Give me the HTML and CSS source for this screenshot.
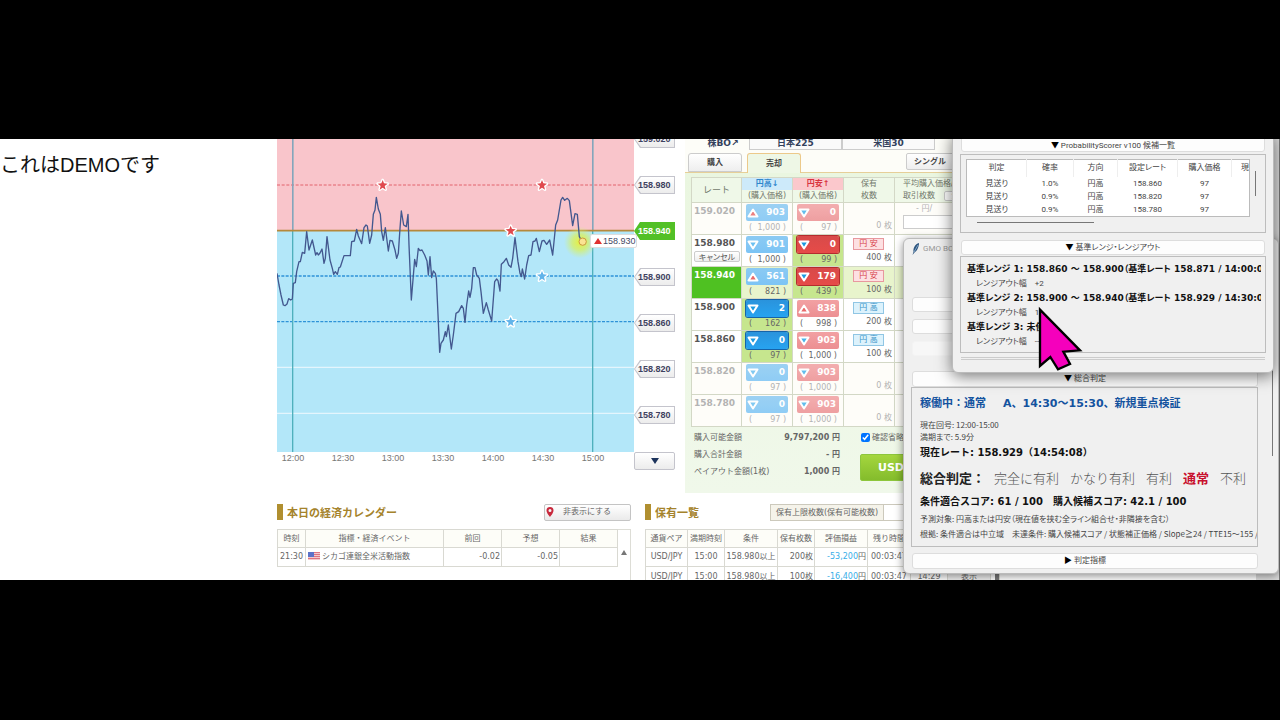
FILE: index.html
```html
<!DOCTYPE html>
<html lang="ja">
<head>
<meta charset="utf-8">
<title>DEMO</title>
<link rel="stylesheet" href="styles.css">
</head>
<body>
<svg class="defs" width="0" height="0" aria-hidden="true">
  <symbol id="star" viewBox="-20 -20 40 40"><path d="M0-15 4-5 15-4 6 3 9 14 0 8-9 14-6 3-15-4-4-5Z" stroke="#fff" stroke-width="8" stroke-linejoin="round" paint-order="stroke"/></symbol>
  <symbol id="down" viewBox="0 0 12 10"><path d="M1.5 1.5h9L6 8.5z" stroke="#fff" stroke-width="2" stroke-linejoin="round"/></symbol>
  <symbol id="up" viewBox="0 0 12 10"><path d="M1.5 8.500h9L6 1.500z" stroke="#fff" stroke-width="2" stroke-linejoin="round"/></symbol>
</svg>
<main class="scene">
  <p class="note">これはDEMOです</p>
  <div class="site">
    <div class="upper">
      <section class="chart">
        <svg class="plot" viewBox="21 12 1071 939">
          <defs><radialGradient id="glow"><stop offset="0" stop-color="#e8f03c"/><stop offset=".5" stop-color="#d8f060" stop-opacity=".75"/><stop offset="1" stop-color="#d0f080" stop-opacity="0"/></radialGradient></defs>
          <rect x="21" y="12" width="1071" height="276" fill="#f9c5cb"/>
          <rect x="21" y="288" width="1071" height="663" fill="#b3e7f9"/>
          <g stroke-width="3" fill="none">
            <path d="M21 697H1092M21 835H1092" stroke="#e4f5fd" stroke-width="4"/>
            <path d="M21 150H1092" stroke="#e2626c" stroke-dasharray="9 5"/>
            <path d="M21 423H1092M21 560H1092" stroke="#2f93d8" stroke-width="4" stroke-dasharray="9 4"/>
            <path d="M68 12V951M968 12V951" stroke="#4fb0bd" stroke-width="4"/>
            <path d="M68 12V285M968 12V285" stroke="#86a4bb" stroke-width="4"/>
            <path d="M21 287H1092" stroke="#b5893c" stroke-width="5"/>
          </g>
          <circle cx="930" cy="322" r="48" fill="url(#glow)"/>
          <polyline fill="none" stroke="#43588f" stroke-width="4" stroke-linejoin="round" points="21,415 27,450 33,480 40,510 45,512 51,507 56,491 62,495 67,492 70,445 76,443 80,410 87,380 91,380 97,352 104,355 110,290 117,345 127,315 137,360 141,353 145,360 150,354 156,342 162,385 166,370 171,305 180,375 187,400 191,418 196,410 202,418 207,398 211,396 222,362 241,362 245,320 253,318 260,283 265,303 275,326 282,278 288,270 292,273 299,325 305,300 310,238 315,225 319,187 325,222 331,238 335,290 340,316 346,278 355,348 360,316 367,318 375,345 380,370 385,355 390,280 394,228 401,270 409,275 414,238 417,330 424,495 434,373 439,395 445,340 450,347 456,345 464,360 471,378 475,420 480,365 485,428 490,408 496,415 499,430 505,560 509,652 513,625 520,615 526,590 529,605 535,570 544,642 550,600 558,535 566,530 575,512 580,520 585,562 590,510 596,468 600,487 605,460 610,398 615,398 620,420 628,430 633,470 640,535 649,503 655,525 665,558 671,480 674,440 680,432 684,437 690,468 694,388 702,380 709,370 716,390 723,397 728,370 735,308 744,380 750,415 754,425 757,402 764,432 770,390 776,362 783,360 789,320 795,318 799,310 808,350 816,318 822,316 830,328 839,315 848,360 857,270 863,255 873,195 878,187 884,196 892,190 898,197 908,272 915,236 922,238 928,305 935,318"/>
          <g fill="#e0494e"><use href="#star" x="318" y="130" width="40" height="40"/><use href="#star" x="796" y="130" width="40" height="40"/><use href="#star" x="702" y="267" width="40" height="40"/></g>
          <g fill="#62b4ea"><use href="#star" x="796" y="403" width="40" height="40"/><use href="#star" x="702" y="540" width="40" height="40"/></g>
          <circle cx="938" cy="320" r="11" fill="#fbe392" stroke="#c99a3c" stroke-width="3"/>
        </svg>
        <div class="current"><i></i>158.930</div>
        <div class="times"><span>12:00</span><span>12:30</span><span>13:00</span><span>13:30</span><span>14:00</span><span>14:30</span><span>15:00</span></div>
      </section>
      <div class="axis">
        <span class="tag"><b>159.020</b></span><span class="tag"><b>158.980</b></span><span class="tag on"><b>158.940</b></span><span class="tag"><b>158.900</b></span><span class="tag"><b>158.860</b></span><span class="tag"><b>158.820</b></span><span class="tag"><b>158.780</b></span>
        <button class="more" aria-label="下へ"><svg width="8" height="6" viewBox="0 0 8 6"><path d="M0 0h8L4 6z" fill="#1c335c"/></svg></button>
      </div>
      <section class="trade">
        <nav class="markets"><a class="stock" href="#">株BO↗</a><a href="#">日本225</a><a href="#">米国30</a></nav>
        <div class="tabs"><button>購入</button><button class="sel">売却</button><button class="single">シングル</button></div>
        <div class="board">
          <table class="rates">
            <colgroup><col class="c-rate"><col class="c-btn"><col class="c-btn"><col class="c-hold"><col></colgroup>
            <thead><tr><th class="rate-h">レート</th><th><em class="hi">円高↓</em>(購入価格)</th><th><em class="lo">円安↑</em>(購入価格)</th><th>保有<br>枚数</th><th class="avg">平均購入価格/<br>取引枚数 <button class="mini">全</button></th></tr></thead>
            <tbody>
              <tr class="dim"><td class="rate">159.020</td>
                <td><button class="bet blue"><svg fill="#e96a6a"><use href="#up"/></svg>903</button><span class="cost"><i>(</i>1,000 )</span></td>
                <td><button class="bet red"><svg fill="#49b4ea"><use href="#down"/></svg>0</button><span class="cost"><i>(</i>97 )</span></td>
                <td class="hold"><span>0 枚</span></td><td class="avg"><span class="yen">- 円/</span><input class="qty" aria-label="取引枚数"></td></tr>
              <tr><td class="rate">158.980<button class="cancel">キャンセル</button></td>
                <td><button class="bet blue"><svg fill="#6cc0f0"><use href="#down"/></svg>901</button><span class="cost"><i>(</i>1,000 )</span></td>
                <td class="held"><button class="bet red on"><svg fill="#1d9be0"><use href="#down"/></svg>0</button><span class="cost"><i>(</i>99 )</span></td>
                <td class="hold"><b class="low">円 安</b><span>400 枚</span></td><td></td></tr>
              <tr class="now"><td class="rate">158.940</td>
                <td><button class="bet blue"><svg fill="#e96a6a"><use href="#up"/></svg>561</button><span class="cost"><i>(</i>821 )</span></td>
                <td class="held"><button class="bet red on"><svg fill="#1d9be0"><use href="#down"/></svg>179</button><span class="cost"><i>(</i>439 )</span></td>
                <td class="hold"><b class="low">円 安</b><span>100 枚</span></td><td></td></tr>
              <tr><td class="rate">158.900</td>
                <td class="held"><button class="bet blue on"><svg fill="#1d9be0"><use href="#down"/></svg>2</button><span class="cost"><i>(</i>162 )</span></td>
                <td><button class="bet red"><svg fill="#e96a6a"><use href="#up"/></svg>838</button><span class="cost"><i>(</i>998 )</span></td>
                <td class="hold"><b class="high">円 高</b><span>200 枚</span></td><td></td></tr>
              <tr><td class="rate">158.860</td>
                <td class="held"><button class="bet blue on"><svg fill="#1d9be0"><use href="#down"/></svg>0</button><span class="cost"><i>(</i>97 )</span></td>
                <td><button class="bet red"><svg fill="#49b4ea"><use href="#down"/></svg>903</button><span class="cost"><i>(</i>1,000 )</span></td>
                <td class="hold"><b class="high">円 高</b><span>100 枚</span></td><td></td></tr>
              <tr class="dim"><td class="rate">158.820</td>
                <td><button class="bet blue"><svg fill="#6cc0f0"><use href="#down"/></svg>0</button><span class="cost"><i>(</i>97 )</span></td>
                <td><button class="bet red"><svg fill="#49b4ea"><use href="#down"/></svg>903</button><span class="cost"><i>(</i>1,000 )</span></td>
                <td class="hold"><span>0 枚</span></td><td></td></tr>
              <tr class="dim"><td class="rate">158.780</td>
                <td><button class="bet blue"><svg fill="#6cc0f0"><use href="#down"/></svg>0</button><span class="cost"><i>(</i>97 )</span></td>
                <td><button class="bet red"><svg fill="#49b4ea"><use href="#down"/></svg>903</button><span class="cost"><i>(</i>1,000 )</span></td>
                <td class="hold"><span>0 枚</span></td><td></td></tr>
            </tbody>
          </table>
          <div class="order">
            <dl class="sums"><dt>購入可能金額</dt><dd>9,797,200 円</dd><dt>購入合計金額</dt><dd>- 円</dd><dt>ペイアウト金額(1枚)</dt><dd>1,000 円</dd></dl>
            <div class="go"><label class="skip"><input type="checkbox" checked>確認省略</label><button class="usd">USD</button></div>
          </div>
        </div>
      </section>
    </div>
    <div class="lower">
      <section class="calendar">
        <header class="head"><h2>本日の経済カレンダー</h2><button class="hide"><svg width="8" height="10" viewBox="0 0 8 10"><path fill-rule="evenodd" d="M4 0a3.500 3.500 0 0 0-3.500 3.500C.5 6 4 10 4 10s3.500-4 3.500-6.500A3.500 3.500 0 0 0 4 0Zm0 2a1.500 1.500 0 1 1 0 3 1.500 1.500 0 0 1 0-3Z" fill="#c8283c"/></svg><span>非表示にする</span></button></header>
        <div class="calbody">
          <table class="grid cal">
            <colgroup><col class="w28"><col><col class="w58"><col class="w58"><col class="w58"></colgroup>
            <tr><th>時刻</th><th>指標・経済イベント</th><th>前回</th><th>予想</th><th>結果</th></tr>
            <tr><td>21:30</td><td class="event"><svg width="12" height="8" viewBox="0 0 12 8"><path fill="#f3c9cc" d="M0 0h12v8H0z"/><path d="M0 .5h12M0 2.500h12M0 4.500h12M0 6.500h12" stroke="#dd7480"/><path fill="#5b72c8" d="M0 0h6v5H0z"/></svg>シカゴ連銀全米活動指数</td><td class="num">-0.02</td><td class="num">-0.05</td><td></td></tr>
          </table>
          <div class="scroll"><svg width="6" height="5" viewBox="0 0 6 5"><path d="M3 0l3 5H0z" fill="#777"/></svg></div>
        </div>
      </section>
      <section class="holdings">
        <header class="head"><h2>保有一覧</h2><span class="limit">保有上限枚数(保有可能枚数)</span><span class="limit val"></span></header>
        <table class="grid pos">
          <colgroup><col class="w42"><col class="w37"><col class="w53"><col class="w37"><col class="w53"><col class="w43"><col class="w37"><col class="w43"><col></colgroup>
          <tr><th>通貨ペア</th><th>満期時刻</th><th>条件</th><th>保有枚数</th><th>評価損益</th><th>残り時間</th><th></th><th></th><th></th></tr>
          <tr><td>USD/JPY</td><td>15:00</td><td>158.980以上</td><td class="num">200枚</td><td class="num"><em>-53,200</em>円</td><td>00:03:47</td><td></td><td></td><td></td></tr>
          <tr><td>USD/JPY</td><td>15:00</td><td>158.980以上</td><td class="num">100枚</td><td class="num"><em>-16,400</em>円</td><td>00:03:47</td><td>14:29</td><td><button class="show">表示</button></td><td class="bar"><i></i></td></tr>
        </table>
      </section>
    </div>
  </div>

  <div class="edge"></div>
  <section class="win back">
    <header class="title"><svg width="8" height="12" viewBox="0 0 8 12"><path d="M7 0C3 1 1 5 1.500 9L.5 12l2-2.500C5 8 7 4 7 0Z" fill="#2d557f"/><path d="M6 2 2 9" stroke="#a8c8e4" stroke-width=".7"/></svg>GMO BO</header>
    <div class="slots"><input aria-label="入力1"><input aria-label="入力2"><input class="faint" aria-label="入力3"></div>
    <button class="fold"><i>▼</i> 総合判定</button>
    <div class="frame verdict">
      <p class="status"><span>稼働中：通常</span><span>A、14:30〜15:30、新規重点検証</span></p>
      <p class="small">現在回号: 12:00-15:00</p>
      <p class="small">満期まで: 5.9分</p>
      <p class="rate-now">現在レート: 158.929（14:54:08）</p>
      <p class="scale"><b>総合判定：</b><span>完全に有利</span><span>かなり有利</span><span>有利</span><b class="hit">通常</b><span>不利</span></p>
      <p class="score"><span>条件適合スコア: 61 / 100</span><span>購入候補スコア: 42.1 / 100</span></p>
      <p class="fine">予測対象: 円高または円安（現在値を挟む全ライン組合せ・非隣接を含む）</p>
      <p class="fine">根拠: 条件適合は中立域　未達条件: 購入候補スコア / 状態補正価格 / Slope≧24 / TTE15〜155 / I</p>
    </div>
    <button class="fold"><i>▶</i> 判定指標</button>
    <i class="bthumb"></i>
  </section>

  <section class="win front">
    <button class="fold"><i>▼</i> ProbabilityScorer v100 候補一覧</button>
    <div class="frame list">
      <div class="view">
        <table class="cand">
          <colgroup><col class="w60"><col class="w47"><col class="w44"><col class="w60"><col class="w54"><col></colgroup>
          <tr><th>判定</th><th>確率</th><th>方向</th><th>設定レート</th><th>購入価格</th><th class="cut">現</th></tr>
          <tr><td>見送り</td><td>1.0%</td><td>円高</td><td>158.860</td><td>97</td><td></td></tr>
          <tr><td>見送り</td><td>0.9%</td><td>円高</td><td>158.820</td><td>97</td><td></td></tr>
          <tr><td>見送り</td><td>0.9%</td><td>円高</td><td>158.780</td><td>97</td><td></td></tr>
        </table>
        <i class="vthumb"></i>
      </div>
      <i class="hthumb"></i>
    </div>
    <button class="fold"><i>▼</i> 基準レンジ・レンジアウト</button>
    <div class="frame ranges">
      <p class="range">基準レンジ 1: 158.860 〜 158.900（基準レート 158.871 / 14:00:00）</p><p class="out"><span>レンジアウト幅</span><span>+2</span></p>
      <p class="range">基準レンジ 2: 158.900 〜 158.940（基準レート 158.929 / 14:30:00）</p><p class="out"><span>レンジアウト幅</span><span>1</span></p>
      <p class="range">基準レンジ 3: 未使用</p><p class="out"><span>レンジアウト幅</span><span>---</span></p>
    </div>
    <hr class="rule">
  </section>
  <svg class="cursor" viewBox="408 210 144 204"><path d="M420 224V393L451 366 474 403 510 387 490 350 540 346Z" fill="#f500bc" stroke="#000" stroke-width="7"/></svg>
</main>
</body>
</html>
```

FILE: styles.css
```css
* { box-sizing: border-box; }
body {
  margin: 0;
  min-height: 100vh;
  padding: 139px 0 140px;
  display: flex;
  background: #000;
  color: #666;
  font: 8px/12px "DejaVu Sans", "Noto Sans CJK JP", sans-serif;
}
p, h2, dl, dd { margin: 0; }
button, input { font: inherit; color: inherit; margin: 0; padding: 0; }
table { border-collapse: collapse; table-layout: fixed; }
th, td { padding: 0; font-weight: 400; text-align: center; }
em, i { font-style: normal; }
a { color: inherit; text-decoration: none; }
.defs { position: absolute; }

.scene { position: relative; flex: 1; display: flex; height: 441px; overflow: hidden; background: #fff; }
.note { flex: 0 0 277px; padding-top: 11px; color: #111; font: 20px/30px "Liberation Sans", "Noto Sans CJK JP", sans-serif; }
.site { flex: 1; min-width: 0; }
.upper { display: flex; height: 354px; }

/* chart */
.chart { position: relative; flex: 0 0 357px; }
.plot { display: block; width: 357px; height: 313px; }
.current {
  position: absolute; left: 313px; top: 95px; z-index: 1;
  display: flex; align-items: center; gap: 1px;
  width: 47px; height: 14px; padding-left: 3px;
  background: #fff; border: 1px solid #ddd; border-radius: 2px;
  color: #444a66; font: 9px/12px "Liberation Sans", sans-serif;
}
.current i { border: 4px solid transparent; border-top: 0; border-bottom: 6px solid #e03030; }
.times { display: flex; margin-left: -9px; font: 9px/13px "Liberation Sans", sans-serif; color: #777; }
.times span { width: 50px; text-align: center; }
.axis { flex: 0 0 41px; display: flex; flex-direction: column; gap: 28px; margin-top: -9px; }
.tag {
  flex: 0 0 18px; padding: 1px; background: #c4c4cc;
  clip-path: polygon(0 50%, 6px 0, 100% 0, 100% 100%, 6px 100%);
  font: 9px/16px "Liberation Sans", sans-serif; color: #3f4260;
}
.tag b { display: block; padding-left: 3px; background: linear-gradient(#fff, #ececec); clip-path: polygon(0 50%, 6px 0, 100% 0, 100% 100%, 6px 100%); }
.tag.on, .tag.on b { background: #52c026; color: #fff; }
.more { height: 18px; border: 1px solid #c4c4cc; border-radius: 2px; background: linear-gradient(#fff, #ececec); display: grid; place-items: center; }

/* trading panel */
.trade { flex: 1; min-width: 0; margin-left: 10px; background: #fdfdf8; }
.markets { display: flex; height: 11px; overflow: hidden; color: #33415c; font-weight: 700; font-size: 9px; line-height: 8px; }
.markets a { flex: 0 0 93px; height: 11px; border: 1px solid #ccc; border-top: 0; text-align: center; background: #fafafa; }
.markets .stock { flex-basis: 64px; border: 0; padding-left: 12px; background: none; }
.tabs { display: flex; gap: 6px; height: 23px; padding: 3px 0 0 3px; border-bottom: 1px solid #e6cf98; color: #444; }
.tabs button { width: 54px; height: 19px; border: 1px solid #ccc; border-radius: 3px 3px 0 0; background: linear-gradient(#fff, #eee); font-weight: 700; }
.tabs .sel { height: 20px; margin-left: -1px; border-color: #ecc98a; border-bottom: 0; background: #eef7e6; }
.tabs .single { width: 58px; height: 17px; margin-left: 99px; padding-right: 10px; border-radius: 2px; }
.board { height: 320px; padding: 4px 0 0 6px; background: linear-gradient(#eaf6e0, #f0f8ea); }
.rates { width: 100%; background: #fff; }
.c-rate { width: 50px; } .c-btn { width: 51px; } .c-hold { width: 51px; }
.rates th, .rates td { border: 1px solid #d3d8c6; vertical-align: top; }
.rates th { height: 25px; background: #eff8e8; line-height: 12px; color: #72786c; }
.rates .rate-h { vertical-align: middle; font-size: 9px; }
.rates em { display: block; font-weight: 700; line-height: 12px; }
.hi { background: #cdeafa; color: #2f86cc; }
.lo { background: #fbc8cc; color: #d8333e; }
.rates .avg { text-align: left; padding-left: 8px; white-space: nowrap; }
.mini { width: 24px; height: 10px; margin-left: 6px; line-height: 8px; border: 1px solid #ccc; border-radius: 2px; background: #fff; }
.rates tbody tr { height: 32px; }
.rates .rate { padding: 2px 0 0 2px; text-align: left; font: 700 9px/12px "DejaVu Sans", sans-serif; color: #555; }
.cancel { display: block; width: 46px; height: 11px; margin-top: 2px; border: 1px solid #ccc; border-radius: 2px; background: linear-gradient(#fff, #eee); font: 8px/9px "Noto Sans CJK JP", sans-serif; font-feature-settings: "palt"; }
.dim td { background: #fefdf9; }
.rates .dim .rate, .dim .cost, .dim .hold, .dim .avg { color: #b3b3b3; }
.dim .bet { opacity: .85; }
.now td { background: #e8f4cc; }
.rates .now .rate { background: #4fc122; color: #fff; }
.rates .held { background: #c6e68e; }
.bet { display: flex; align-items: center; justify-content: space-between; width: 42px; height: 17px; margin: 1px 0 0 4px; padding: 0 3px 0 1px; border: 0; border-radius: 2px; color: #fff; font: 700 9px/15px "DejaVu Sans", sans-serif; }
.bet svg { width: 12px; height: 10px; }
.blue { background: linear-gradient(#8bcaf3, #7cc4f5); }
.red { background: linear-gradient(#f2a1a3, #ec8f92); }
.blue.on { background: linear-gradient(#2a93dc, #27a3f0); box-shadow: 0 0 0 1px #1763a8; }
.red.on { background: linear-gradient(#d84a4a, #e64b48); box-shadow: 0 0 0 1px #b42c2e; }
.cost { display: flex; justify-content: space-between; padding: 1px 6px 0 7px; line-height: 12px; }
.rates .hold { padding: 3px 2px 0 0; text-align: right; vertical-align: bottom; }
.hold b { display: block; width: 31px; height: 12px; margin-left: 9px; line-height: 10px; border: 1px solid; text-align: center; font-weight: 400; }
.hold span { display: block; line-height: 16px; }
.hold .low { background: #fde0e2; color: #d63a45; border-color: #e8989e; }
.hold .high { background: #dcf2fc; color: #3a93c8; border-color: #90c6e4; }
.yen { display: block; line-height: 12px; padding-left: 13px; }
.qty { display: block; width: 60px; height: 14px; border: 1px solid #ccc; background: #fff; }
.order { display: flex; gap: 20px; padding: 2px 0 0 3px; }
.sums { flex: 0 0 146px; display: grid; grid-template-columns: auto auto; grid-auto-rows: 17px; line-height: 17px; }
.sums dd { text-align: right; font-weight: 700; }
.go { flex: 1; }
.skip { display: flex; align-items: center; height: 17px; white-space: nowrap; }
.skip input { width: 9px; height: 9px; margin: 0 2px 0 1px; }
.usd { width: 120px; height: 27px; margin-top: 8px; padding-left: 17px; border: 1px solid #8dc63c; border-radius: 2px; background: linear-gradient(#a4d63e, #84bc2c); color: #fff; font-weight: 700; font-size: 11px; text-align: left; }

/* lower tables */
.lower { display: flex; gap: 14px; padding-top: 10px; }
.calendar { flex: 0 0 354px; }
.holdings { flex: 1; min-width: 0; }
.head { display: flex; align-items: center; height: 18px; margin-bottom: 8px; }
.head h2 { border-left: 6px solid #b08f30; padding-left: 4px; color: #a5832c; font: 700 11px/16px "Noto Sans CJK JP", sans-serif; }
.hide { display: flex; align-items: center; gap: 9px; width: 87px; height: 17px; margin-left: auto; padding-left: 1px; border: 1px solid #c4c4c4; border-radius: 2px; background: linear-gradient(#fff, #eaeaea); }
.limit { height: 17px; margin-left: 71px; padding: 0 5px; border: 1px solid #ccc9bc; background: #f5f3ea; line-height: 15px; white-space: nowrap; }
.val { width: 100px; margin-left: -1px; background: #fff; }
.calbody { display: flex; height: 60px; border: 1px solid #ddddd6; border-width: 1px 1px 0 0; }
.grid th, .grid td { height: 19px; border: 1px solid #d9d9d2; white-space: nowrap; overflow: hidden; }
.grid th { height: 18px; background: #fdfdf8; }
.grid em { color: #38aee8; }
.grid .num { text-align: right; padding-right: 1px; }
.cal { flex: 1; margin: -1px 0 0; height: 38px; }
.grid .event { padding-left: 2px; text-align: left; }
.event svg { margin-right: 2px; vertical-align: -1px; }
.scroll { flex: 0 0 12px; padding-top: 17px; text-align: center; }
.pos { width: 355px; }
.show { width: 100%; height: 17px; border: 0; background: #eee; }
.grid .bar { text-align: left; padding: 3px 0 0 4px; }
.bar i { display: block; width: 6px; height: 16px; background: #777; }
.w28 { width: 28px; } .w58 { width: 58px; } .w42 { width: 42px; } .w37 { width: 37px; }
.w53 { width: 53px; } .w43 { width: 43px; } .w60 { width: 60px; } .w47 { width: 47px; }
.w44 { width: 44px; } .w54 { width: 54px; }

/* floating windows */
.edge { position: absolute; right: 0; top: 0; bottom: 0; width: 24px; background: #dcdcdc; border-right: 1px solid #777; }
.win {
  position: absolute; display: flex; flex-direction: column;
  background: #f0f0f0; border: 1px solid #bbb; border-radius: 6px; color: #444;
  font-family: Roboto, "Noto Sans CJK JP", sans-serif; font-feature-settings: "palt";
  padding: 0 8px;
}
.fold { flex: 0 0 16px; border: 1px solid #ddd; border-radius: 3px; background: #fdfdfd; line-height: 14px; }
.frame { border: 1px solid #bdbdbd; overflow: hidden; white-space: nowrap; }
.back { left: 903px; top: 99px; width: 376px; height: 336px; padding-right: 20px; box-shadow: 0 2px 8px rgba(0, 0, 0, .45); }
.title { flex: 0 0 20px; display: flex; align-items: center; gap: 3px; color: #999; }
.slots { display: flex; flex-direction: column; gap: 7px; padding: 38px 0 15px; }
.slots input { flex: 0 0 15px; width: 100%; border: 1px solid #ddd; border-radius: 3px; background: #fdfdfd; }
.slots .faint { border-color: #f3f3f3; background: #f7f7f7; }
.fold i { color: #000; }
.verdict { flex: 0 0 160px; margin: 0 0 6px -1px; padding: 6px 0 0 8px; }
.status { display: flex; gap: 17px; color: #14539f; font: 700 11px/20px "DejaVu Sans", "Noto Sans CJK JP", sans-serif; margin-bottom: 5px; }
.small, .fine { font-family: "Noto Sans CJK JP", sans-serif; }
.small { line-height: 12px; }
.rate-now { margin: 2px 0 7px; color: #111; font: 700 10px/16px "DejaVu Sans", "Noto Sans CJK JP", sans-serif; }
.scale { display: flex; gap: 11px; font: 300 13px/20px "Noto Sans CJK JP", sans-serif; color: #555; font-feature-settings: normal; }
.scale b { font-weight: 700; color: #222; margin-right: -2px; }
.scale .hit { color: #c8102e; margin-right: 0; }
.score { display: flex; gap: 10px; margin: 6px 0 1px; color: #111; font: 700 10px/16px "DejaVu Sans", "Noto Sans CJK JP", sans-serif; }
.fine { line-height: 15px; }
.bthumb { position: absolute; right: 5px; top: 0; width: 1px; height: 217px; background: #777; }
.front { left: 952px; top: -7px; width: 322px; height: 241px; box-shadow: 0 3px 16px rgba(0, 0, 0, .55); }
.front .fold { flex: 0 0 19px; padding: 7px 0 0; line-height: 10px; }
.list { flex: 0 0 79px; margin: 2px -1px 7px; padding: 4px 0 0 5px; }
.view { display: flex; }
.cand { width: 284px; height: 58px; border: 1px solid #bbb; background: #fff; }
.cand th { height: 17px; border-right: 1px solid #eee; }
.cand td { line-height: 13px; height: 13px; }
.cand .cut { border: 0; overflow: hidden; text-align: right; }
.vthumb { width: 1px; height: 25px; margin: 12px 0 0 5px; background: #777; }
.hthumb { display: block; width: 117px; height: 1px; margin: 5px 0 0 11px; background: #777; }
.front .list + .fold { flex-basis: 15px; padding: 0; line-height: 13px; }
.ranges { flex: 0 0 97px; margin: 1px -1px 4px; padding: 5px 4px 0 6px; }
.range { overflow: hidden; color: #111; font: 700 9px/15px "DejaVu Sans", "Noto Sans CJK JP", sans-serif; font-feature-settings: "palt"; }
.out { display: flex; gap: 8px; padding-left: 9px; line-height: 14px; }
.rule { width: 100%; height: 3px; margin: 0; border: 1px solid #ccc; border-width: 1px 0; }
.cursor { position: absolute; left: 1036px; top: 166px; width: 48px; height: 68px; }
```
